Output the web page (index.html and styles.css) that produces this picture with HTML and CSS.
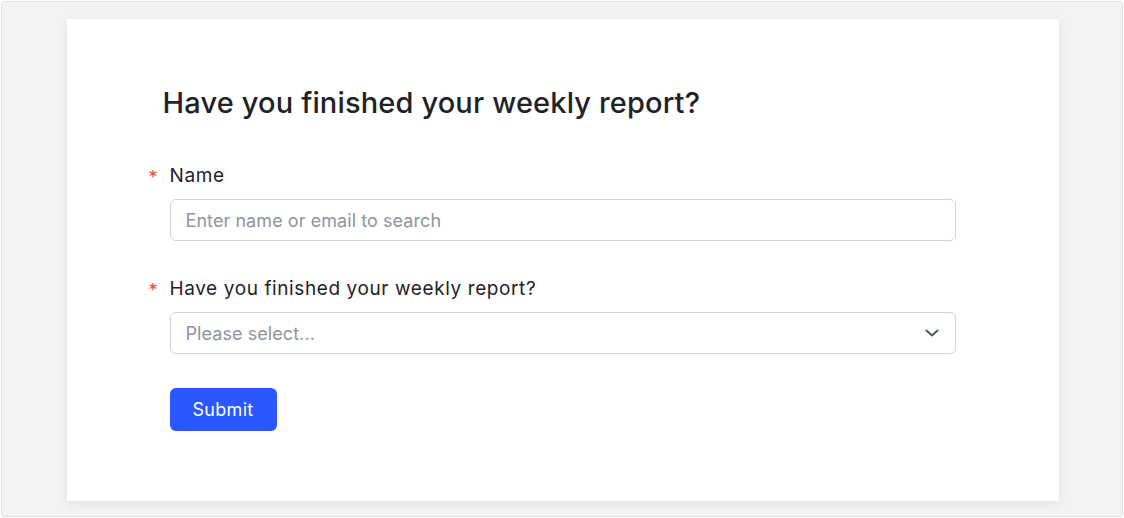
FILE: index.html
```html
<!DOCTYPE html>
<html lang="en">
<head>
<meta charset="utf-8">
<title>Weekly report</title>
<link rel="stylesheet" href="styles.css">
</head>
<body>
<div class="frame">
  <main class="card">
    <h1 class="title">Have you finished your weekly report?</h1>
    <form class="form">
      <div class="field">
        <label class="label"><span class="req">*</span>Name</label>
        <div class="control"><span class="placeholder">Enter name or email to search</span></div>
      </div>
      <div class="field">
        <label class="label"><span class="req">*</span>Have you finished your weekly report?</label>
        <div class="control select">
          <span class="placeholder">Please select...</span>
          <svg class="chevron" width="14" height="8" viewBox="0 0 14 8"><path d="M1.5 1.5 L7 6.5 L12.5 1.5" fill="none" stroke="#4e5969" stroke-width="2" stroke-linecap="round" stroke-linejoin="round"/></svg>
        </div>
      </div>
      <div class="actions"><button type="button" class="btn">Submit</button></div>
    </form>
  </main>
</div>
</body>
</html>
```
FILE: styles.css
```css
* { box-sizing: border-box; }
html, body { margin: 0; padding: 0; }
body {
  font-family: Inter, "Noto Sans", "Liberation Sans", sans-serif;
  color: #1f2329;
  background: #ffffff;
}
.frame {
  margin: 1px;
  height: 516px;
  border: 1px solid #dee0e3;
  border-radius: 4px;
  background: #f2f3f5;
  padding: 17px 0 0;
  display: flex;
  justify-content: center;
  align-items: flex-start;
}
.card {
  width: 992px;
  margin-left: 1px;
  background: #ffffff;
  box-shadow: 0 3px 10px rgba(31, 35, 41, 0.08);
  padding: 66px 103px 70px;
}
.title {
  margin: 0 0 42px -7px;
  font-size: 29px;
  line-height: 36px;
  font-weight: 500;
  letter-spacing: 0.15px;
  color: #1f2329;
}
.form { display: flex; flex-direction: column; gap: 35px; }
.field { display: flex; flex-direction: column; gap: 10px; }
.label {
  position: relative;
  font-size: 19px;
  line-height: 26px;
  letter-spacing: 0.6px;
  color: #1f2329;
}
.req {
  position: absolute;
  left: -21px;
  top: 2px;
  color: #f54a45;
  font-size: 18px;
  letter-spacing: 0;
}
.control {
  height: 42px;
  border: 1px solid #d0d3d6;
  border-radius: 6px;
  padding: 0 15px;
  display: flex;
  align-items: center;
}
.select { justify-content: space-between; padding-right: 16px; }
.placeholder {
  font-size: 18px;
  letter-spacing: 0.07px;
  color: #8f959e;
}
.actions { margin-top: -1px; }
.btn {
  height: 43px;
  padding: 0 23px;
  border: none;
  border-radius: 6px;
  background: #2a57ff;
  color: #ffffff;
  font-family: inherit;
  font-size: 18px;
  letter-spacing: 0.3px;
}
```
